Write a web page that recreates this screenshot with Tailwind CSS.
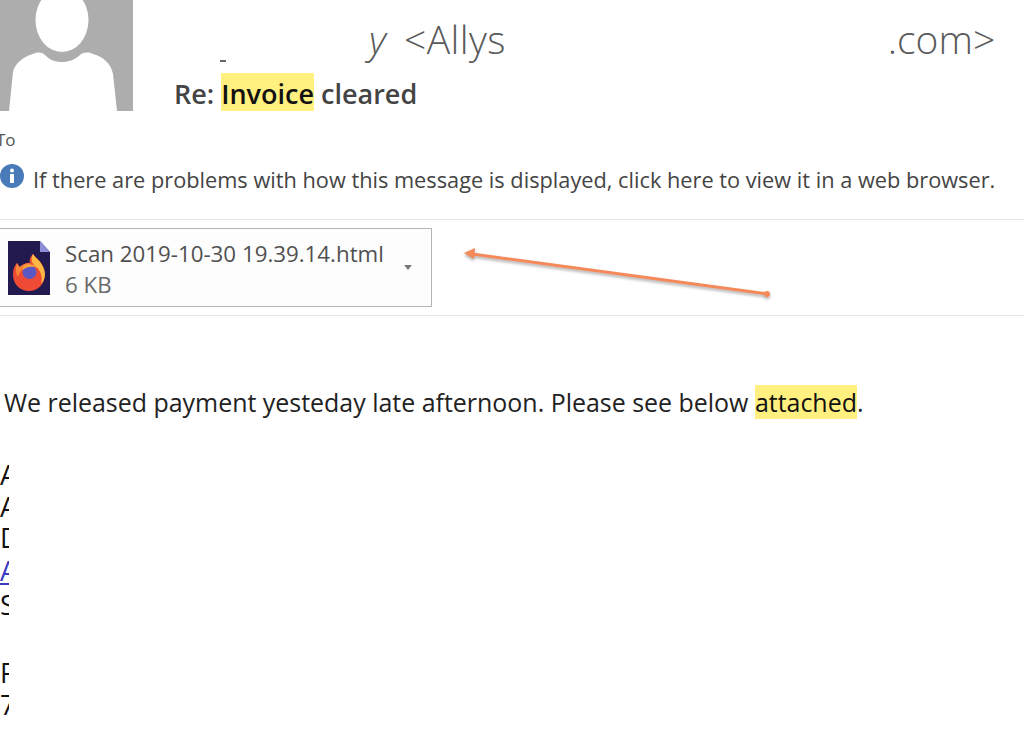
<!DOCTYPE html>
<html lang="en">
<head>
<meta charset="UTF-8">
<title>Re: Invoice cleared</title>
<script src="https://cdn.jsdelivr.net/npm/@tailwindcss/browser@4"></script>
</head>
<body class="bg-white font-['Open_Sans',sans-serif] w-[1024px] h-[743px] overflow-hidden relative">

<!-- header -->
<div class="flex h-[111px]">
  <svg class="w-[133px] h-[111px] shrink-0" viewBox="0 0 133 111">
    <rect width="133" height="111" fill="#adadad"/>
    <ellipse cx="62" cy="20" rx="26.5" ry="32" fill="#fff"/>
    <path d="M9 111L13 72C15 64 22 57 33 54C38 52 41 52 45 55C50 60 55 62 62 62C69 62 74 60 80 55C84 52 88 52 93 54C104 57 111 64 113 74L117 111Z" fill="#fff"/>
  </svg>
  <div class="flex-1 relative">
    <div class="absolute left-[87px] top-[60px] w-[6px] h-[2px] bg-[#666666]"></div>
    <div class="flex text-[39px] leading-[48px] font-light text-[#5a5a5a] h-[56px] pt-[15px] whitespace-nowrap">
      <span class="ml-[236px] w-[24px] italic">y</span>
      <span class="ml-[11px] tracking-[0.4px]">&lt;Allys</span>
      <span class="ml-[382px]">.com&gt;</span>
    </div>
    <div class="pl-[41px] mt-[17px] text-[27px] leading-[42px] font-semibold text-[#444444] h-[38px] whitespace-nowrap">Re: <span class="bg-[#fff07f] text-[#111111] inline-block h-[38px]">Invoice</span> cleared</div>
  </div>
</div>

<!-- to + info -->
<div class="pt-[18px] h-[109px] border-b border-[#e6e6e6]">
  <div class="text-[17px] leading-[22px] text-[#555555] -ml-[4px]">To</div>
  <div class="flex items-center mt-[14px] h-[30px]">
    <svg class="w-[24px] h-[24px] shrink-0 -mt-[8px]" viewBox="0 0 24 24">
      <circle cx="12" cy="12" r="12" fill="#4a7ab8"/>
      <rect x="10" y="10" width="4" height="9" fill="#fff"/>
      <circle cx="12" cy="6.5" r="2" fill="#fff"/>
    </svg>
    <div class="ml-[9px] text-[21.75px] leading-[30px] text-[#444444] whitespace-nowrap">If there are problems with how this message is displayed, click here to view it in a web browser.</div>
  </div>
</div>

<!-- attachment -->
<div class="h-[96px] border-b border-[#e6e6e6] pt-[8px]">
  <div class="flex items-center w-[432px] h-[79px] border border-[#b4b4b4] border-l-0 bg-[#fdfdfd]">
    <svg class="w-[42px] h-[54px] ml-[8px] shrink-0" viewBox="0 0 42 54">
      <path d="M0 0H32L42 11V54H0Z" fill="#221a4f"/>
      <path d="M32 0L42 11H32Z" fill="#8f8fd8"/>
      <path d="M5 34C5 29 6 25 9 22C10 24 11 25 12 26C15 23 20 21 22 22C21 19 22 16 25 13C27 17 36 21 37 33C37 43 30 50 21 50C12 50 5 43 5 34Z" fill="#ef4b34"/>
      <path d="M25 13C27 17 36 21 37 33C37 37 35 41 33 43C35 36 33 29 26 24C23 21 23 17 25 13Z" fill="#fdb944"/>
      <path d="M9 22C10 24 11 25 12 26C15 23 20 21 24 23C18 24 12 29 10 36C8 33 7 27 9 22Z" fill="#f9853a"/>
      <circle cx="21.5" cy="31" r="7" fill="#5a58c4"/>
      <path d="M15 27C18 22 25 22 29 27C25 25 19 25 15 29Z" fill="#f9a13c"/>
    </svg>
    <div class="ml-[15px] flex-1 pt-[3px]">
      <div class="text-[22.3px] leading-[30px] text-[#505050] whitespace-nowrap">Scan 2019-10-30 19.39.14.html</div>
      <div class="text-[22.3px] leading-[30px] text-[#6a6a6a] mt-[1px]">6 KB</div>
    </div>
    <div class="mr-[19px] w-0 h-0 border-x-[4px] border-x-transparent border-t-[5px] border-t-[#777777]"></div>
  </div>
</div>

<!-- body -->
<div class="pt-[68px] pl-[4px] text-[24.95px] leading-[36px] text-[#222222] whitespace-nowrap">We released payment yesteday late afternoon. Please see below <span class="bg-[#fff07f] text-[#111111]">attached</span>.</div>

<!-- signature cut off at the left -->
<div class="mt-[39px] w-[9px] overflow-hidden text-[27px] text-[#111111] whitespace-nowrap">
  <div class="h-[32px] leading-[32px]">A</div>
  <div class="h-[31px] leading-[31px]">A</div>
  <div class="h-[32px] leading-[32px]">D</div>
  <div class="h-[34px] leading-[34px] text-[#3a3ac0] underline">A</div>
  <div class="h-[66px] leading-[34px]">S</div>
  <div class="h-[38px] leading-[38px]">F</div>
  <div class="h-[26px] leading-[26px] overflow-hidden">7</div>
</div>

<!-- annotation arrow over the page -->
<svg class="absolute left-[450px] top-[240px]" width="330" height="65" viewBox="0 0 330 65">
  <defs>
    <filter id="arrowShadow" x="-5%" y="-50%" width="110%" height="200%">
      <feDropShadow dx="0" dy="2" stdDeviation="1.5" flood-color="#777" flood-opacity="0.6"/>
    </filter>
  </defs>
  <g filter="url(#arrowShadow)">
    <line x1="22" y1="14" x2="318" y2="54" stroke="#f4895a" stroke-width="3"/>
    <path d="M14 13L25 8L24 19Z" fill="#f4895a"/>
    <circle cx="317" cy="54" r="3" fill="#f4895a"/>
  </g>
</svg>
</body>
</html>
